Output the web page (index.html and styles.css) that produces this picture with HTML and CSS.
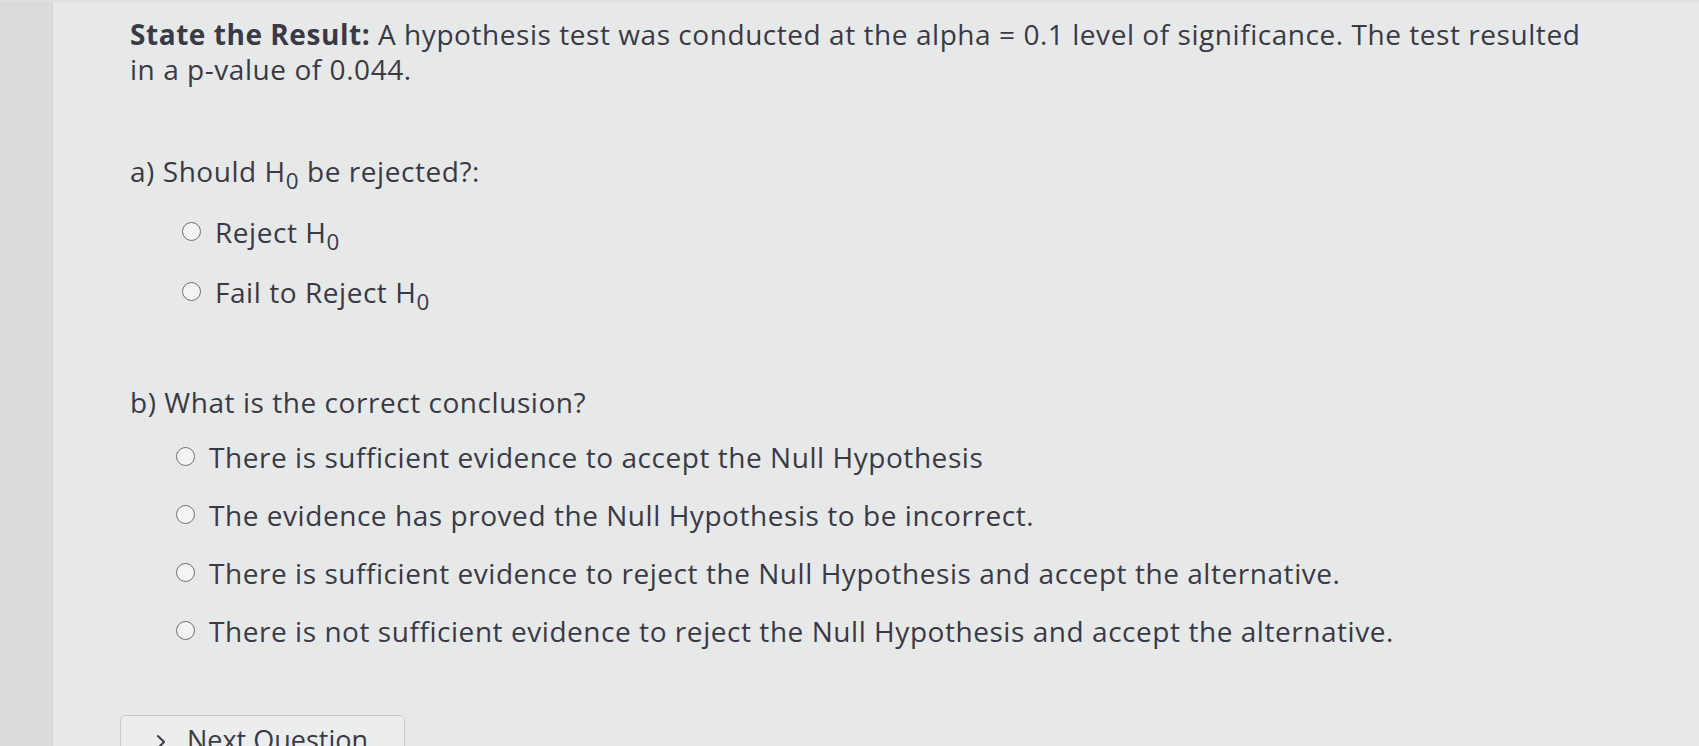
FILE: index.html
```html
<!DOCTYPE html>
<html lang="en">
<head>
<meta charset="utf-8">
<title>State the Result</title>
<link rel="stylesheet" href="styles.css">
</head>
<body>
<div class="page">
  <div class="strip"></div>
  <main class="content">
    <p class="intro"><b>State the Result:</b> A hypothesis test was conducted at the alpha = 0.1 level of significance. The test resulted in a p-value of 0.044.</p>

    <p class="question q-a">a) Should H<sub>0</sub> be rejected?:</p>
    <ul class="options opts-a">
      <li class="option"><span class="radio"></span><span class="label">Reject H<sub>0</sub></span></li>
      <li class="option"><span class="radio"></span><span class="label">Fail to Reject H<sub>0</sub></span></li>
    </ul>

    <p class="question q-b">b) What is the correct conclusion?</p>
    <ul class="options opts-b">
      <li class="option"><span class="radio"></span><span class="label">There is sufficient evidence to accept the Null Hypothesis</span></li>
      <li class="option"><span class="radio"></span><span class="label">The evidence has proved the Null Hypothesis to be incorrect.</span></li>
      <li class="option"><span class="radio"></span><span class="label">There is sufficient evidence to reject the Null Hypothesis and accept the alternative.</span></li>
      <li class="option"><span class="radio"></span><span class="label">There is not sufficient evidence to reject the Null Hypothesis and accept the alternative.</span></li>
    </ul>

    <button class="next-btn" type="button">
      <svg class="chev" width="12" height="16" viewBox="0 0 12 16"><path d="M3 2 L9 8 L3 14" fill="none" stroke="#3d3c48" stroke-width="2" stroke-linecap="round" stroke-linejoin="round"/></svg>
      <span>Next Question</span>
    </button>
  </main>
</div>
</body>
</html>
```

FILE: styles.css
```css
html, body {
  margin: 0;
  padding: 0;
  height: 100%;
  overflow: hidden;
}

body {
  background: #e7e9e8;
  font-family: "Open Sans", "Noto Sans", sans-serif;
  font-variant-ligatures: none;
  color: #3a3946;
}

.page {
  display: flex;
  min-height: 746px;
  border-top: 2px solid #dfe1e0;
  box-sizing: border-box;
}

.strip {
  width: 52px;
  flex: none;
  background: #dadcdb;
  border-right: 1px solid #d2d4d3;
}

.content {
  flex: 1;
  padding: 15px 0 0 77px;
  font-size: 28px;
  line-height: 35px;
  letter-spacing: 0.55px;
}

p {
  margin: 0;
}

.intro {
  width: 1465px;
}

.intro b {
  font-weight: 700;
}

sub {
  font-size: 0.8em;
  line-height: 0;
  vertical-align: -0.3em;
}

.q-a {
  margin-top: 67px;
}

.q-b {
  margin-top: 75px;
}

.options {
  list-style: none;
  margin: 0;
  padding: 0 0 0 52px;
  display: flex;
  flex-direction: column;
}

.opts-a {
  margin-top: 26px;
  gap: 25px;
}

.opts-b {
  margin-top: 20px;
  gap: 23px;
  padding-left: 46px;
}

.option {
  display: flex;
  align-items: center;
  gap: 14px;
}

.radio {
  width: 17px;
  height: 17px;
  flex: none;
  border: 1.5px solid #707070;
  border-radius: 50%;
  background: #f3f4f3;
  margin-top: -3px;
}

.next-btn {
  margin: 66px 0 0 -10px;
  width: 285px;
  height: 60px;
  display: flex;
  align-items: flex-start;
  gap: 20px;
  padding: 6px 0 0 34px;
  box-sizing: border-box;
  background: #eceeed;
  border: 1px solid #c9cbca;
  border-radius: 5px;
  font-family: "Open Sans", "Noto Sans", sans-serif;
  font-size: 27px;
  line-height: 35px;
  color: #3a3946;
}

.chev {
  margin-top: 12px;
  flex: none;
}
```
